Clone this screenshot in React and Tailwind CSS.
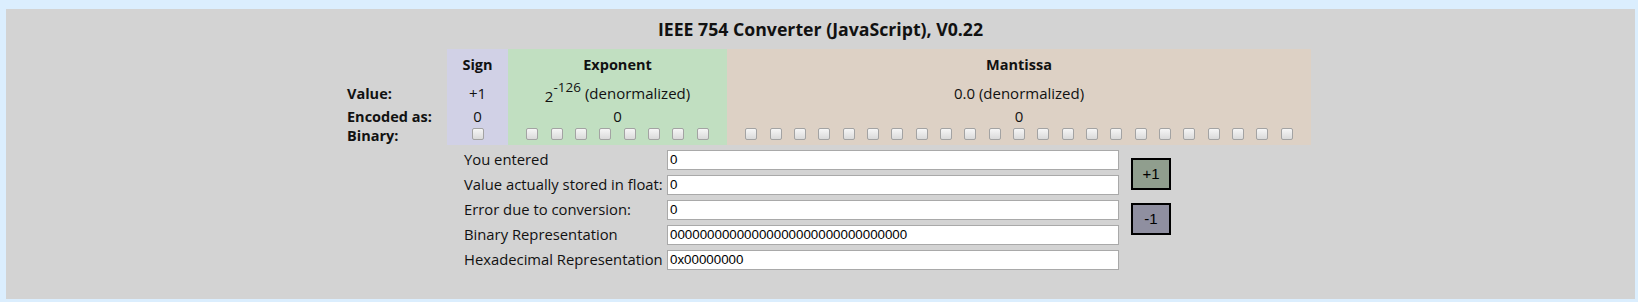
const EXP_BITS = 8
const MAN_BITS = 23

const ui = { fontFamily: '"Open Sans", "Noto Sans", sans-serif' }
const mono = { fontFamily: '"Liberation Sans", Arial, sans-serif' }

function Bit() {
  return (
    <div className="flex flex-1 justify-center">
      <div className="h-[12px] w-[12px] rounded-[2px] border border-[#a3a3a3] bg-linear-to-b from-[#f6f6f6] to-[#dadada]" />
    </div>
  )
}

function Field({ label, value }) {
  return (
    <div className="flex h-[25px] items-center">
      <span className="w-[203px] whitespace-nowrap text-[14.8px] text-[#111]">{label}</span>
      <div
        className="flex h-[20px] w-[452px] items-center border border-[#a9a9a9] bg-white px-[2px] text-[13.33px] text-black"
        style={mono}
      >
        {value}
      </div>
    </div>
  )
}

export default function App() {
  return (
    <div className="min-h-[302px] bg-[#dbeefe] pb-[3px] pl-[6px] pr-[3px] pt-[9px]" style={ui}>
      <div className="h-[290px] bg-[#d3d3d3]">
        <h1 className="flex h-[40px] items-center justify-center text-[17.7px] font-bold text-[#111]">
          IEEE 754 Converter (JavaScript), V0.22
        </h1>

        <div className="mx-auto w-[981px] text-[15px] text-[#111]">
          <div className="flex">
            <div className="flex w-[117px] flex-col pl-[17px] text-[14.5px] font-bold">
              <div className="h-[32px]" />
              <div className="flex h-[25px] items-center">Value:</div>
              <div className="flex h-[21px] items-center">Encoded as:</div>
              <div className="flex h-[18px] items-center">Binary:</div>
            </div>

            <div className="flex w-[61px] flex-col bg-[#d1d1e6] px-[12px] text-center">
              <div className="flex h-[32px] items-center justify-center text-[14.5px] font-bold">Sign</div>
              <div className="flex h-[25px] items-center justify-center">+1</div>
              <div className="flex h-[21px] items-center justify-center">0</div>
              <div className="flex h-[18px] items-start pt-[1px]">
                <Bit />
              </div>
            </div>

            <div className="flex w-[219px] flex-col bg-[#c1dfc1] px-[12px]">
              <div className="flex h-[32px] items-center justify-center text-[14.5px] font-bold">Exponent</div>
              <div className="flex h-[25px] items-center justify-center">
                <span className="mt-[6px]">2</span>
                <sup className="text-[13.5px]">-126</sup>
                <span className="ml-[4px]">(denormalized)</span>
              </div>
              <div className="flex h-[21px] items-center justify-center">0</div>
              <div className="flex h-[18px] items-start pt-[1px]">
                {Array.from({ length: EXP_BITS }, (_, i) => (
                  <Bit key={i} />
                ))}
              </div>
            </div>

            <div className="flex w-[584px] flex-col bg-[#ddd1c5] px-[12px]">
              <div className="flex h-[32px] items-center justify-center text-[14.5px] font-bold">Mantissa</div>
              <div className="flex h-[25px] items-center justify-center">0.0 (denormalized)</div>
              <div className="flex h-[21px] items-center justify-center">0</div>
              <div className="flex h-[18px] items-start pt-[1px]">
                {Array.from({ length: MAN_BITS }, (_, i) => (
                  <Bit key={i} />
                ))}
              </div>
            </div>
          </div>

          <div className="mt-[2px] flex pl-[134px]">
            <div className="flex flex-col">
              <Field label="You entered" value="0" />
              <Field label="Value actually stored in float:" value="0" />
              <Field label="Error due to conversion:" value="0" />
              <Field label="Binary Representation" value={'0'.repeat(32)} />
              <Field label="Hexadecimal Representation" value="0x00000000" />
            </div>
            <div className="ml-[12px] flex flex-col pt-[11px]" style={mono}>
              <button className="h-[32px] w-[40px] border-2 border-black bg-[#909e8e] text-[15px] text-black">
                +1
              </button>
              <button className="mt-[13px] h-[32px] w-[40px] border-2 border-black bg-[#8f8fa0] text-[15px] text-black">
                -1
              </button>
            </div>
          </div>
        </div>
      </div>
    </div>
  )
}
